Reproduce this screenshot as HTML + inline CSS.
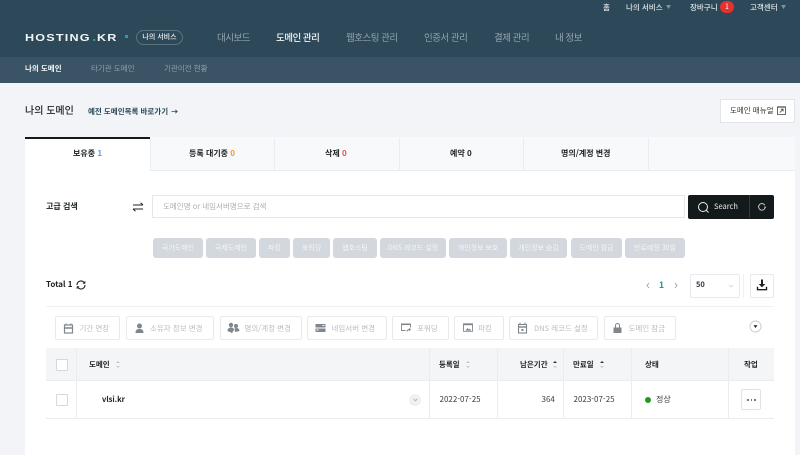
<!DOCTYPE html>
<html lang="ko"><head><meta charset="utf-8"><title>나의 도메인</title>
<style>
*{box-sizing:border-box}
html,body{margin:0;padding:0}
body{width:800px;height:455px;overflow:hidden;position:relative;background:#f2f4f8;font-family:"Noto Sans CJK KR","Liberation Sans",sans-serif;color:#1c2226}
.a,.t,svg{position:absolute}
.t{white-space:nowrap;line-height:14px;height:14px;font-size:8px}
.b{font-weight:700}
.m{font-weight:500}
.n{font-size:9.5px;letter-spacing:-.5px;line-height:16px;height:16px;top:28.5px;color:#93a4ae}
.logo{font-family:"Liberation Sans",sans-serif;font-weight:700;font-size:10.5px;letter-spacing:1px;line-height:12px;height:12px;top:31.5px;color:#f2f5f6;transform-origin:0 50%;transform:scaleX(1.2)}
.chip{position:absolute;top:238px;height:20px;background:#d3d8de;border-radius:3px;color:#f4f5f7;font-size:7px;line-height:21px;text-align:center;white-space:nowrap}
.act{position:absolute;top:316px;height:24px;background:#fff;border:1px solid #e8eaee;border-radius:2px}
.act .t{color:#b8bdc3;font-size:7.5px;top:4.500px}
.v{position:absolute;width:1px;background:#e9ecf0}
.h{position:absolute;height:1px;background:#e9ecf0}
.cb{position:absolute;width:12px;height:12px;background:#fff;border:1px solid #d5d9de;border-radius:1px}
.s{position:absolute;width:0;height:0;border-left:2px solid transparent;border-right:2px solid transparent}
.up{border-bottom:2.5px solid #c6cbd0}.dn{border-top:2.5px solid #c6cbd0}
.up.on{border-bottom-color:#333}
.th{top:357.500px;font-size:7.5px;color:#222;font-weight:700}
.td{top:392.500px;font-size:8px;color:#3c4044}
</style></head><body>

<div class="a" style="left:0;top:0;width:800px;height:57px;background:#2d4858"></div>
<div class="a" style="left:0;top:57px;width:800px;height:26px;background:#3a5466"></div>

<div class="t m" style="left:603px;top:.5px;color:#e8edf0;font-size:7.5px">홈</div>
<div class="t m" style="left:626px;top:.5px;color:#dfe5e9;font-size:7.5px">나의 서비스</div>
<div class="t" style="left:666px;top:1px;color:#80929e;font-size:5px">▼</div>
<div class="t m" style="left:690px;top:.5px;color:#dfe5e9;font-size:7.5px">장바구니</div>
<div class="a" style="left:720px;top:1px;width:14px;height:12px;border-radius:6px;background:#e5322e;color:#fff;font-size:7px;line-height:12px;text-align:center">1</div>
<div class="t m" style="left:750px;top:.5px;color:#dfe5e9;font-size:7.5px">고객센터</div>
<div class="t" style="left:781px;top:1px;color:#80929e;font-size:5px">▼</div>

<div class="t logo" style="left:25px">HOSTING</div>
<div class="t logo" style="left:91.500px;color:#17a79c;font-size:13px;letter-spacing:0;top:30.500px">.</div>
<div class="t logo" style="left:97px">KR</div>
<div class="a" style="left:125px;top:35px;width:2.500px;height:2.500px;background:#1aa5a0"></div>
<div class="a" style="left:136px;top:30px;width:47px;height:15px;border:1px solid #5b7482;border-radius:8px;color:#eef2f4;font-size:7px;line-height:13px;text-align:center;font-weight:500;white-space:nowrap">나의 서비스</div>

<div class="t n" style="left:217px">대시보드</div>
<div class="t n m" style="left:276px;color:#f2f5f6">도메인 관리</div>
<div class="t n" style="left:346px">웹호스팅 관리</div>
<div class="t n" style="left:424px">인증서 관리</div>
<div class="t n" style="left:494px">결제 관리</div>
<div class="t n" style="left:555px">내 정보</div>

<div class="t b" style="left:25px;top:61.500px;color:#f2f5f6;font-size:7.5px">나의 도메인</div>
<div class="t" style="left:91px;top:61.500px;color:#8fa0ab;font-size:7.5px">타기관 도메인</div>
<div class="t" style="left:164px;top:61.500px;color:#8fa0ab;font-size:7.5px">기관이전 현황</div>

<div class="t m" style="left:25px;top:103px;font-size:10px;color:#1d2226">나의 도메인</div>
<div class="t b" style="left:88px;top:104.500px;font-size:7.500px;color:#2d4858">예전 도메인목록 바로가기</div>
<svg style="left:170.500px;top:108.500px" width="7" height="5" viewBox="0 0 7 5" fill="none" stroke="#2d4858" stroke-width=".8"><path d="M.5 2.500h5.500M4.300 .8L6.200 2.500L4.300 4.200"/></svg>

<div class="a" style="left:720px;top:99px;width:75px;height:24px;background:#fff;border:1px solid #e1e4e9"></div>
<div class="t" style="left:730px;top:104px;font-size:7.5px;color:#333">도메인 매뉴얼</div>
<svg style="left:777px;top:106px" width="9" height="9" viewBox="0 0 9 9" fill="none" stroke="#444" stroke-width=".8"><path d="M.5 1h8v7.500H.5z"/><path d="M2.800 6.500L6 3.300M3.800 3.200H6.100V5.500"/><path d="M.5 1h8" stroke-width="1.200"/></svg>

<!-- panel -->
<div class="a" style="left:25px;top:137px;width:770px;height:318px;background:#fff"></div>
<div class="a" style="left:150px;top:137px;width:645px;height:34px;background:#f8f9fb;border-bottom:1px solid #e7eaee"></div>
<div class="a" style="left:25px;top:137px;width:125px;height:1.500px;background:#14181b"></div>
<div class="v" style="left:149.500px;top:138px;height:33px"></div>
<div class="v" style="left:274px;top:138px;height:33px"></div>
<div class="v" style="left:399px;top:138px;height:33px"></div>
<div class="v" style="left:523px;top:138px;height:33px"></div>
<div class="v" style="left:648px;top:138px;height:33px"></div>

<div class="t b" style="left:73px;top:146.500px;font-size:8px">보유중 <span style="color:#5b9be8">1</span></div>
<div class="t b" style="left:189px;top:146.500px;font-size:8px">등록 대기중 <span style="color:#f39a1f">0</span></div>
<div class="t b" style="left:325px;top:146.500px;font-size:8px">삭제 <span style="color:#ee4a4a">0</span></div>
<div class="t b" style="left:450px;top:146.500px;font-size:8px">예약 0</div>
<div class="t b" style="left:561px;top:146.500px;font-size:8px">명의/계정 변경</div>

<div class="t b" style="left:46px;top:199.500px;font-size:8px">고급 검색</div>
<svg style="left:132px;top:202px" width="12" height="10" viewBox="0 0 12 10" fill="none" stroke="#222" stroke-width="1"><path d="M1 3h10M8.500 .8L11 3M11 7H1M3.500 9.200L1 7"/></svg>
<div class="a" style="left:152px;top:195px;width:533px;height:23px;background:#fff;border:1px solid #e4e7eb"></div>
<div class="t" style="left:163px;top:199.500px;font-size:7.500px;color:#a9aeb4">도메인명 or 네임서버명으로 검색</div>
<div class="a" style="left:688px;top:195px;width:86px;height:23.500px;background:#14191b;border-radius:2px"></div>
<div class="v" style="left:749px;top:195px;height:23px;background:#333a3d"></div>
<svg style="left:697px;top:201px" width="13" height="13" viewBox="0 0 13 13" fill="none" stroke="#eee" stroke-width="1"><circle cx="6" cy="6" r="4.500"/><path d="M9.300 9.300L11.500 11.500"/></svg>
<div class="t" style="left:714px;top:199.500px;font-size:7.500px;color:#e8eaeb">Search</div>
<svg style="left:757px;top:202px" width="10" height="10" viewBox="0 0 10 10" fill="none" stroke="#ddd" stroke-width=".9"><path d="M7.800 3.300A3.300 3.300 0 1 0 8 6"/><path d="M6.800 4.800h2.600L8.100 6.300z" fill="#ddd" stroke="none"/></svg>

<div class="chip" style="left:153px;width:50px">국가도메인</div>
<div class="chip" style="left:206px;width:50px">국제도메인</div>
<div class="chip" style="left:259px;width:31px">파킹</div>
<div class="chip" style="left:293px;width:37px">포워딩</div>
<div class="chip" style="left:333px;width:44px">웹호스팅</div>
<div class="chip" style="left:380px;width:66px">DNS 레코드 설정</div>
<div class="chip" style="left:449px;width:58px">개인정보 보호</div>
<div class="chip" style="left:510px;width:57px">개인정보 숨김</div>
<div class="chip" style="left:571px;width:51px">도메인 잠금</div>
<div class="chip" style="left:625px;width:60px">만료예정 30일</div>

<div class="t b" style="left:46px;top:278px;font-size:8px;color:#222">Total 1</div>
<svg style="left:76px;top:280px" width="10" height="10" viewBox="0 0 10 10" fill="none" stroke="#222" stroke-width="1.100"><path d="M1 5a4 4 0 0 1 7-2.600M9 5a4 4 0 0 1-7 2.600"/><path d="M9.300 .8v3H6.500zM.7 9.200v-3h2.800z" fill="#222" stroke="none"/></svg>

<svg style="left:645px;top:281px" width="6" height="9" viewBox="0 0 6 9" fill="none" stroke="#999" stroke-width=".8"><path d="M4 2L2 4.500L4 7"/></svg>
<div class="t b" style="left:659px;top:277.500px;font-size:8.500px;color:#129a9a">1</div>
<svg style="left:673px;top:281px" width="6" height="9" viewBox="0 0 6 9" fill="none" stroke="#999" stroke-width=".8"><path d="M2 2L4 4.500L2 7"/></svg>
<div class="a" style="left:690px;top:274px;width:50px;height:24px;background:#fff;border:1px solid #e6e9ed;border-radius:2px"></div>
<div class="t b" style="left:696px;top:278px;font-size:7.500px;color:#333">50</div>
<svg style="left:728px;top:284px" width="6" height="4" viewBox="0 0 6 4" fill="none" stroke="#c5c9ce" stroke-width=".7"><path d="M1 1L3 3L5 1"/></svg>
<div class="v" style="left:743px;top:274px;height:24px;background:#eef0f3"></div>
<div class="a" style="left:750px;top:274px;width:24px;height:24px;background:#fff;border:1px solid #e6e9ed;border-radius:2px"></div>
<svg style="left:756px;top:279px" width="12" height="12" viewBox="0 0 12 12" fill="#222"><path d="M5 .5h2v4.500h2.300L6 8.400 2.700 5H5z"/><path d="M.8 7.800h1.400v2.200h7.600V7.800h1.400v3.600H.8z"/></svg>

<div class="h" style="left:46px;top:306px;width:728px;background:#eff1f4"></div>

<div class="act" style="left:55px;width:65px"><div class="t" style="left:23.500px">기간 연장</div></div>
<svg style="left:63px;top:323px" width="11" height="11" viewBox="0 0 11 11" fill="none" stroke="#7f868c" stroke-width="1.200"><rect x="1.500" y="2" width="8" height="8"/><path d="M1.500 5h8" stroke-width="1.500"/><path d="M3 .5v2M8 .5v2"/></svg>
<div class="act" style="left:126px;width:88px"><div class="t" style="left:23px">소유자 정보 변경</div></div>
<svg style="left:134px;top:323px" width="11" height="11" viewBox="0 0 11 11" fill="#7f868c"><circle cx="5.500" cy="3" r="2.500"/><path d="M1.500 10c0-3 1.500-4 4-4s4 1 4 4z"/></svg>
<div class="act" style="left:220px;width:82px"><div class="t" style="left:23.500px">명의/계정 변경</div></div>
<svg style="left:227px;top:322px" width="13" height="12" viewBox="0 0 13 12" fill="#7f868c"><circle cx="4" cy="3" r="2.200"/><circle cx="9" cy="4" r="2"/><path d="M.5 9c0-2.500 1.500-3.500 3.500-3.500S7 6.500 7 8L5 11zM8 10l-.5-3.500c2-1 5-.5 5 2.500z"/></svg>
<div class="act" style="left:307px;width:80px"><div class="t" style="left:23.500px">네임서버 변경</div></div>
<svg style="left:315px;top:323px" width="11" height="10" viewBox="0 0 11 10" fill="#7f868c"><rect x=".5" y="1" width="10" height="3.500"/><rect x=".5" y="5.500" width="10" height="3.500"/><path d="M7.500 2h2v1h-2zM1.500 6.500h2v1h-2z" fill="#fff"/></svg>
<div class="act" style="left:392px;width:57px"><div class="t" style="left:24px">포워딩</div></div>
<svg style="left:401px;top:323px" width="10" height="9" viewBox="0 0 10 9" fill="none" stroke="#7f868c" stroke-width=".9"><path d="M9.500 4.500V1H.5v6.500h4"/><path d="M.5 1.300h9" stroke-width="1.500"/><path d="M6 8.500c0-1.500 1-2 3-2M8 5.300l1.500 1.200L8 7.800"/></svg>
<div class="act" style="left:454px;width:50px"><div class="t" style="left:23px">파킹</div></div>
<svg style="left:463px;top:323px" width="10" height="9" viewBox="0 0 10 9" fill="none" stroke="#7f868c" stroke-width=".9"><rect x=".5" y=".8" width="9" height="7.500"/><path d="M.5 1.500h9" stroke-width="1.400"/><path d="M2.500 7.500l2-2.500L6 6.500l1-1 1 2z" fill="#7f868c" stroke="none"/></svg>
<div class="act" style="left:509px;width:89px"><div class="t" style="left:24px">DNS 레코드 설정</div></div>
<svg style="left:517px;top:322px" width="11" height="12" viewBox="0 0 11 12" fill="none" stroke="#7f868c" stroke-width="1.100"><rect x="1.500" y="2.500" width="8" height="8.500"/><path d="M1.500 5h8" stroke-width="1.400"/><path d="M3 .8v2M8 .8v2"/><path d="M4.500 7h2v2h-2z" fill="#7f868c" stroke="none"/></svg>
<div class="act" style="left:604px;width:72px"><div class="t" style="left:23.500px">도메인 잠금</div></div>
<svg style="left:612px;top:322px" width="11" height="12" viewBox="0 0 11 12" fill="#7f868c"><path d="M1.500 5.500h8V11h-8z"/><path d="M3.500 5.500V3.500a2 2 0 0 1 4 0v2" fill="none" stroke="#7f868c"/></svg>

<svg style="left:749px;top:320px" width="13" height="13" viewBox="0 0 13 13"><circle cx="6.500" cy="6.500" r="5.500" fill="#fff" stroke="#c8ccd1" stroke-width=".9"/><path d="M4.500 5.300h4L6.500 8z" fill="#222"/></svg>

<!-- table -->
<div class="a" style="left:46px;top:348px;width:728px;height:33px;background:#f3f5f7;border-bottom:1px solid #e9ecf0"></div>
<div class="h" style="left:46px;top:418px;width:728px"></div>
<div class="v" style="left:76px;top:348px;height:70px"></div>
<div class="v" style="left:429px;top:348px;height:70px"></div>
<div class="v" style="left:497px;top:348px;height:70px"></div>
<div class="v" style="left:563px;top:348px;height:70px"></div>
<div class="v" style="left:631px;top:348px;height:70px"></div>
<div class="v" style="left:728px;top:348px;height:70px"></div>

<div class="cb" style="left:56px;top:359px"></div>
<div class="cb" style="left:56px;top:394px"></div>

<div class="t th" style="left:89px">도메인</div>
<div class="s up" style="left:115.500px;top:361px"></div><div class="s dn" style="left:115.500px;top:366px"></div>
<div class="t th" style="left:439px">등록일</div>
<div class="s up" style="left:466px;top:361px"></div><div class="s dn" style="left:466px;top:366px"></div>
<div class="t th" style="left:520px">남은기간</div>
<div class="s up on" style="left:552.500px;top:361px"></div><div class="s dn" style="left:552.500px;top:366px"></div>
<div class="t th" style="left:573px">만료일</div>
<div class="s up on" style="left:599.500px;top:361px"></div><div class="s dn" style="left:599.500px;top:366px"></div>
<div class="t th" style="left:645px">상태</div>
<div class="t th" style="left:744px">작업</div>

<div class="t b" style="left:102px;top:392.500px;font-size:7.500px;color:#222">vlsi.kr</div>
<div class="a" style="left:409px;top:394px;width:12px;height:12px;border-radius:6px;background:#eef0f4"></div>
<svg style="left:412.500px;top:398px" width="5" height="4" viewBox="0 0 5 4" fill="none" stroke="#99a0a8" stroke-width=".7"><path d="M.8 1L2.500 2.800L4.200 1"/></svg>
<div class="t td" style="left:439.500px">2022-07-25</div>
<div class="t td" style="left:541.500px">364</div>
<div class="t td" style="left:573.500px">2023-07-25</div>
<div class="a" style="left:644.500px;top:396.500px;width:6px;height:6px;border-radius:3px;background:#23981e"></div>
<div class="t td" style="left:656px">정상</div>
<div class="a" style="left:741px;top:389px;width:20px;height:21px;background:#fff;border:1px solid #dfe2e6;border-radius:2px;"></div>
<div class="a" style="left:747px;top:399px;width:1.500px;height:1.500px;background:#777"></div>
<div class="a" style="left:750.500px;top:399px;width:1.500px;height:1.500px;background:#777"></div>
<div class="a" style="left:754px;top:399px;width:1.500px;height:1.500px;background:#777"></div>

</body></html>
